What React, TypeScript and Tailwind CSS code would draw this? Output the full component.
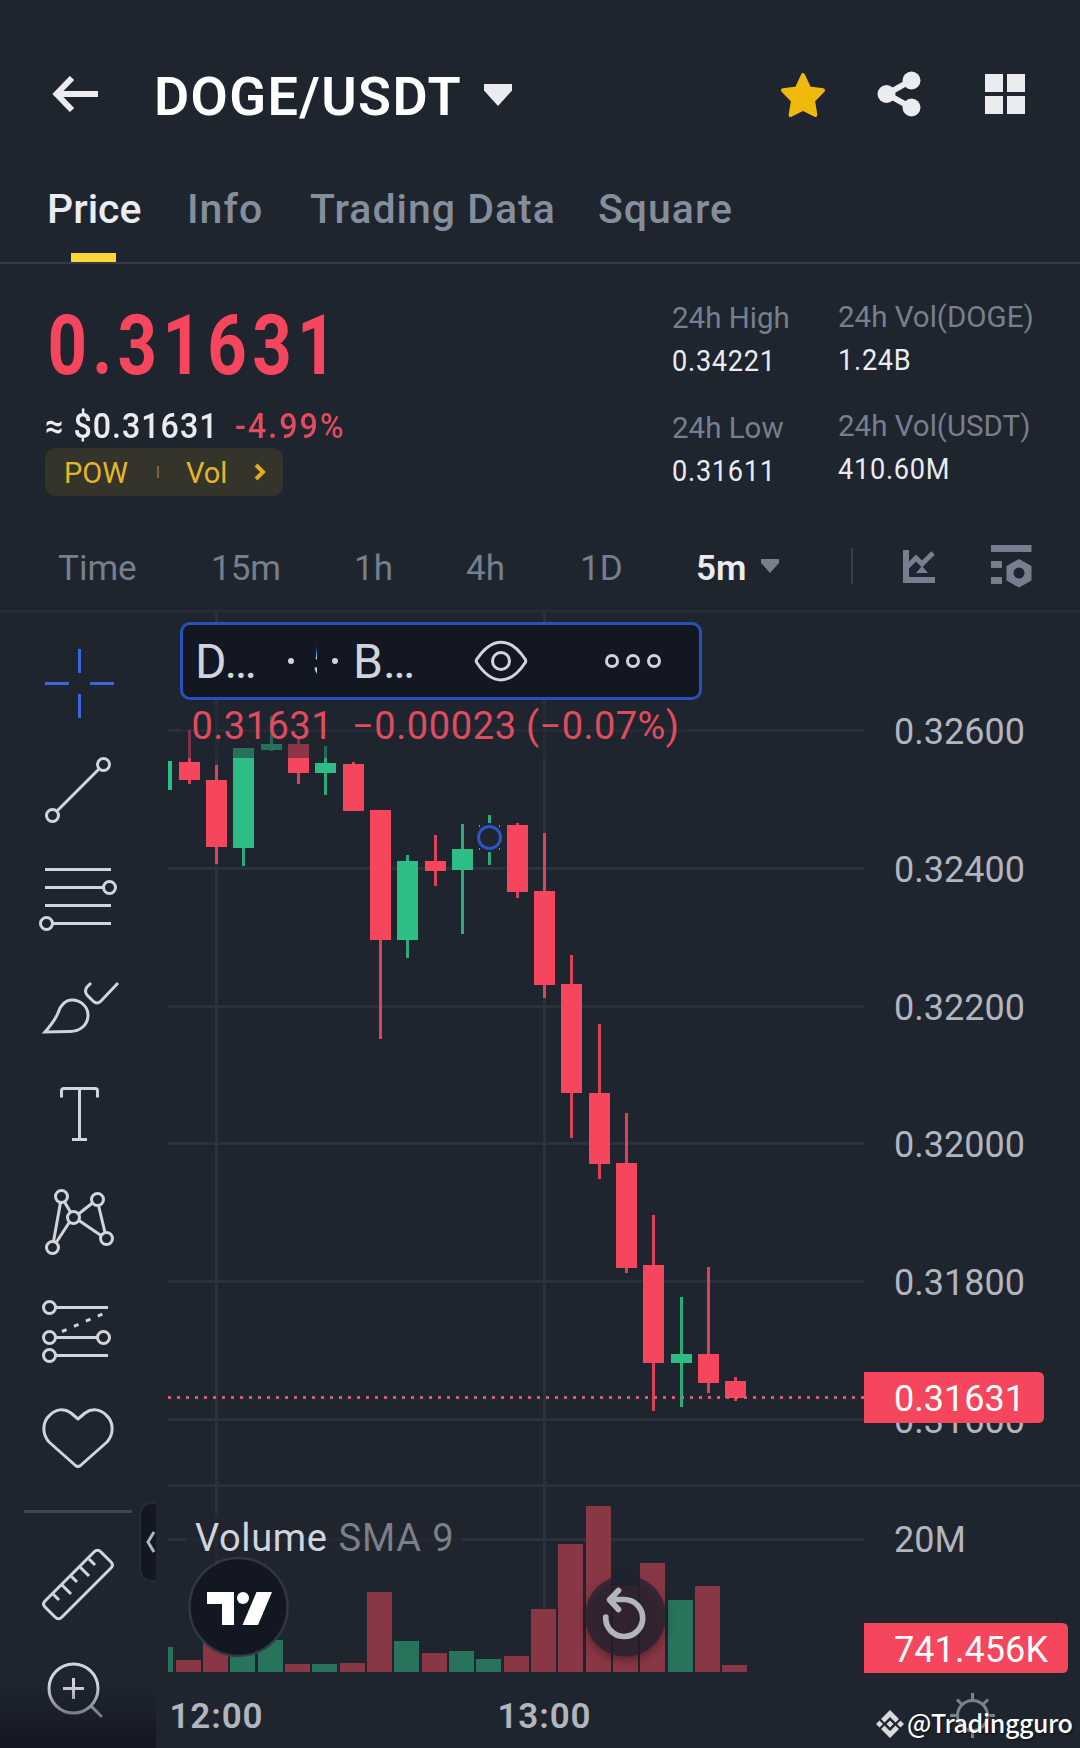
import type { ReactNode } from "react";

const UP = "#2ebd85";
const DOWN = "#f6465d";

const tabs = [
  { label: "Price", width: "w-[140px]", active: true },
  { label: "Info", width: "w-[123px]" },
  { label: "Trading Data", width: "w-[288px]" },
  { label: "Square", width: "w-[160px]" },
];

const intervals = [
  { label: "Time", width: "w-[153px]" },
  { label: "15m", width: "w-[143px]" },
  { label: "1h", width: "w-[112px]" },
  { label: "4h", width: "w-[114px]" },
  { label: "1D", width: "w-[116px]" },
];

const priceLevels = [
  { label: "0.32600", y: 730.5 },
  { label: "0.32400", y: 868.5 },
  { label: "0.32200", y: 1006.5 },
  { label: "0.32000", y: 1143.5 },
  { label: "0.31800", y: 1281.5 },
  { label: "0.31600", y: 1419.5 },
];

type Candle = {
  up?: boolean;
  body: [number, number];
  wick: [number, number];
  vol: number;
};

// first candle opens at 11:55, one every five minutes
const candles: Candle[] = [
  { body: [762, 780], wick: [730, 784], vol: 1660 },
  { body: [780, 847], wick: [765, 864], vol: 1640 },
  { up: true, body: [748, 848], wick: [748, 866], vol: 1650 },
  { up: true, body: [744, 750], wick: [716, 751], vol: 1640 },
  { body: [744, 773], wick: [737, 784], vol: 1664 },
  { up: true, body: [763, 773], wick: [746, 795], vol: 1664 },
  { body: [764, 811], wick: [762, 811], vol: 1663 },
  { body: [810, 940], wick: [810, 1039], vol: 1592 },
  { up: true, body: [861, 940], wick: [855, 958], vol: 1641 },
  { body: [861, 871], wick: [835, 886], vol: 1653 },
  { up: true, body: [849, 870], wick: [824, 934], vol: 1651 },
  { up: true, body: [825, 850], wick: [815, 865], vol: 1659 },
  { body: [825, 892], wick: [823, 898], vol: 1656 },
  { body: [891, 985], wick: [833, 998], vol: 1609 },
  { body: [984, 1093], wick: [955, 1138], vol: 1544 },
  { body: [1093, 1164], wick: [1024, 1179], vol: 1506 },
  { body: [1163, 1268], wick: [1113, 1273], vol: 1586 },
  { body: [1265, 1363], wick: [1215, 1411], vol: 1563 },
  { up: true, body: [1354, 1363], wick: [1297, 1407], vol: 1600 },
  { body: [1354, 1383], wick: [1267, 1393], vol: 1586 },
  { body: [1381, 1398], wick: [1377, 1401], vol: 1665 },
];

const candleX = (i: number) => Math.floor(216.51 + ((i - 1) * 328) / 12) + 0.5;

function Header() {
  return (
    <header className="flex h-[188px] items-center pl-[52px] pr-[55px]">
      <svg width="46" height="36" viewBox="0 0 46 36" fill="none" stroke="#eaecef" strokeWidth="6">
        <path d="M4 18H46M20 2 4.500 18 20 34" />
      </svg>
      <h1 className="ml-[56px] w-[330px] whitespace-nowrap pt-[6px] text-[54px] font-semibold leading-none tracking-[1.4px] text-white">
        DOGE/USDT
      </h1>
      <svg className="mt-[2px]" width="28" height="22" viewBox="0 0 28 22" fill="#eaecef">
        <path d="M0 0H28V6.500L14 22 0 6.500Z" />
      </svg>
      <div className="ml-auto flex items-center">
        <svg className="mt-[2px]" width="46" height="46" viewBox="0 0 46 46">
          <path
            d="M23 3 29.200 16.600 43 18.300 33 28.600 35.400 43 23 36.700 10.600 43 13 28.600 3 18.300 16.800 16.600Z"
            fill="#f0b90b"
            stroke="#f0b90b"
            strokeWidth="4"
            strokeLinejoin="round"
          />
        </svg>
        <svg className="ml-[51px]" width="44" height="46" viewBox="0 0 44 46" fill="#eaecef">
          <path d="M34 9.500 10 23 34 36.500" fill="none" stroke="#eaecef" strokeWidth="6" />
          <circle cx="9.500" cy="23" r="9" />
          <circle cx="34.500" cy="9.500" r="9" />
          <circle cx="34.500" cy="36.500" r="9" />
        </svg>
        <div className="ml-[64px] grid grid-cols-2 gap-[4px]">
          <i className="h-[18px] w-[18px] bg-[#eaecef]" />
          <i className="h-[18px] w-[18px] bg-[#eaecef]" />
          <i className="h-[18px] w-[18px] bg-[#eaecef]" />
          <i className="h-[18px] w-[18px] bg-[#eaecef]" />
        </div>
      </div>
    </header>
  );
}

function Tabs() {
  return (
    <nav className="flex h-[76px] border-b-2 border-[#333b47] pl-[47px]">
      {tabs.map((tab) => (
        <div key={tab.label} className={tab.width}>
          <div
            className={
              tab.active
                ? "whitespace-nowrap text-[41px] font-medium leading-[42px] text-[#eaecef]"
                : "whitespace-nowrap text-[41px] font-medium leading-[42px] tracking-[1px] text-[#848e9c]"
            }
          >
            {tab.label}
          </div>
          {tab.active && <div className="ml-[24px] mt-[23px] h-[9px] w-[45px] bg-[#fcd535]" />}
        </div>
      ))}
    </nav>
  );
}

function Stat({ label, value }: { label: string; value: string }) {
  return (
    <div className="whitespace-nowrap text-[29.500px] leading-[42px]">
      <div className="text-[#767f8d]">{label}</div>
      <div className="origin-left translate-y-px scale-x-[0.92] tracking-[0.8px] text-[#eaecef]">{value}</div>
    </div>
  );
}

function Ticker() {
  return (
    <section className="flex h-[258px] pl-[45px]">
      <div className="w-[627px] pt-[40px]">
        <div className="origin-left scale-x-[0.82] whitespace-nowrap pl-[3px] text-[84px] font-bold leading-[84px] tracking-[6.500px] text-[#f6465d]">
          0.31631
        </div>
        <div className="mt-[19px] flex h-[41px] whitespace-nowrap text-[35px] font-medium leading-[40px]">
          <span className="w-[190px] origin-left scale-x-[0.92] tracking-[1.100px] text-[#eaecef]">≈ $0.31631</span>
          <span className="origin-left scale-x-[0.92] tracking-[2.200px] text-[#e24a5f]">-4.99%</span>
        </div>
        <div className="flex h-[48px] w-[238px] items-center rounded-[11px] bg-[#35342b] pl-[19px] text-[29px] leading-none text-[#e4b52c]">
          <span className="w-[93px] pt-[2px]">POW</span>
          <i className="h-[12px] w-[2px] bg-[#7d6427]" />
          <span className="w-[95px] pl-[27px] pt-[2px]">Vol</span>
          <svg width="12" height="18" viewBox="0 0 12 18" fill="none" stroke="#e0ac1c" strokeWidth="4">
            <path d="M2 2 9 9 2 16" />
          </svg>
        </div>
      </div>
      <div className="flex w-[166px] flex-col gap-[26px] pt-[33px]">
        <Stat label="24h High" value="0.34221" />
        <Stat label="24h Low" value="0.31611" />
      </div>
      <div className="flex flex-col gap-[25px] pt-[32px]">
        <Stat label="24h Vol(DOGE)" value="1.24B" />
        <Stat label="24h Vol(USDT)" value="410.60M" />
      </div>
    </section>
  );
}

function Intervals() {
  return (
    <section className="flex h-[91px] items-center border-b-[3px] border-[#252c36] pl-[58px] text-[35px] text-[#767f8d]">
      {intervals.map((item) => (
        <span key={item.label} className={item.width + " pt-[6px]"}>
          {item.label}
        </span>
      ))}
      <span className="w-[65px] pt-[6px] font-semibold text-[#eaecef]">5m</span>
      <svg width="18" height="14" viewBox="0 0 18 14" fill="#767f8d">
        <path d="M0 0H18V4L9 14 0 4Z" />
      </svg>
      <i className="ml-[72px] h-[36px] w-[2px] bg-[#363e49]" />
      <svg className="ml-[50px]" width="32" height="33" viewBox="0 0 32 33">
        <path d="M3 0V30H32" fill="none" stroke="#767f8f" strokeWidth="6" />
        <path d="M4 17 13 8 19 14 30 3" fill="none" stroke="#767f8f" strokeWidth="5" />
        <path d="M13 23 19 16 25 23Z" fill="#767f8f" />
      </svg>
      <svg className="ml-[56px]" width="41" height="43" viewBox="0 0 41 43" fill="#767f8f">
        <path d="M0 0H40.500V7H0ZM0 16H11V23H0ZM0 32H11V39H0Z" />
        <path
          fillRule="evenodd"
          d="M28 14 40.500 21V35.500L28 42.500 15.500 35.500V21ZM28 22.500A5.500 5.500 0 1 0 28 33.500A5.500 5.500 0 1 0 28 22.500Z"
        />
      </svg>
    </section>
  );
}

function Tool({ children }: { children: ReactNode }) {
  return (
    <svg
      className="block shrink-0"
      width="156"
      height="108"
      viewBox="0 0 156 108"
      fill="none"
      stroke="#d1d4dc"
      strokeWidth="3"
    >
      {children}
    </svg>
  );
}

function Toolbar() {
  return (
    <aside className="relative flex h-[1135px] w-[156px] shrink-0 flex-col pt-[17px]">
      <Tool>
        <path d="M45 53.500H69M90 53.500H114M79.500 19V43M79.500 64V88" stroke="#3c66dd" />
      </Tool>
      <Tool>
        <circle cx="103.500" cy="26.500" r="6" />
        <circle cx="52.500" cy="77.500" r="6" />
        <path d="M57 73 99 31" />
      </Tool>
      <Tool>
        <path d="M45 23.500H111M45 41.500H103M45 59.500H111M53 77.500H111" />
        <circle cx="109.500" cy="41.500" r="6" />
        <circle cx="46.500" cy="77.500" r="6" />
      </Tool>
      <Tool>
        <path d="M45 78 C52 70 55 66 58 59 C60 52 65 46 72 46 C81 46 88 53 88 61 C88 71 80 77.500 70 77.500Z" />
        <path d="M91 29 87 33Q84 37 87 41L93 47Q97 51 101 47L118 29" />
      </Tool>
      <Tool>
        <path d="M61.500 35.500V29Q61.500 26.500 64 26.500H95Q97.500 26.500 97.500 29V35.500M79.500 26.500V77M72 77.500H87" />
      </Tool>
      <Tool>
        <circle cx="61.500" cy="26.500" r="6" />
        <circle cx="97.500" cy="29.500" r="6" />
        <circle cx="73.500" cy="47.500" r="6" />
        <circle cx="52.500" cy="77.500" r="6" />
        <circle cx="106.500" cy="68.500" r="6" />
        <path d="M60.500 32.500 53.500 71.500M64.500 32 70.500 42M92.500 33 78.500 44M69.500 52 56.500 72M79 50.500 101 65.500M98.500 35.500 105 62.500" />
      </Tool>
      <Tool>
        <path d="M56 29.500H108M56 59.500H97M56 77.500H108" />
        <path d="M62 53.500 106 34.500" strokeDasharray="5 8" />
        <circle cx="49.500" cy="29.500" r="6" />
        <circle cx="49.500" cy="59.500" r="6" />
        <circle cx="103.500" cy="59.500" r="6" />
        <circle cx="49.500" cy="77.500" r="6" />
      </Tool>
      <Tool>
        <path
          d="M78 33 71 27C64 22 56 23 50 29C42 36 42 48 49 56L75.500 79.500Q78 81.500 80.500 79.500L107 56C114 48 114 36 106 29C100 23 92 22 85 27Z"
          strokeLinejoin="round"
        />
      </Tool>
      <div className="ml-[24px] mt-[16px] h-[3px] w-[108px] shrink-0 bg-[#434651]" />
      <div className="h-[18px] shrink-0" />
      <Tool>
        <path d="M45 70 94 21Q97.500 17.500 101 21L111 31Q114 34 111 37L62 86Q58.500 89.500 55 86L45 76Q42 73 45 70Z" />
        <path d="M53 63 59 69M62 54 71 63M71 45 77 51M80 36 89 45M89 28 95 34" />
      </Tool>
      <Tool>
        <circle cx="73.500" cy="49.500" r="24.500" />
        <path d="M63 49.500H84M73.500 39V60M91 67 102 78" />
      </Tool>
      <div className="absolute bottom-0 left-0 h-[64px] w-[156px] bg-gradient-to-b from-[#131722]/0 to-[#131722]" />
      <div className="absolute right-0 top-[889px] flex h-[80px] w-[17px] items-center rounded-l-[13px] border-2 border-r-0 border-[#262b36] bg-[#131722] pl-[5px]">
        <svg width="10" height="22" viewBox="0 0 10 22" fill="none" stroke="#a9b7c2" strokeWidth="3">
          <path d="M8 1 2 11 8 21" />
        </svg>
      </div>
    </aside>
  );
}

function Legend() {
  return (
    <div className="absolute left-[24px] top-[9px] flex h-[78px] w-[522px] items-center rounded-[10px] border-[3px] border-[#2850b8] bg-[#131722] pl-[12px] text-[48px] leading-none text-[#d1d4dc]">
      <span className="w-[93px] pt-px tracking-[0.5px]">D…</span>
      <i className="h-[6px] w-[6px] rounded-full bg-[#d1d4dc]" />
      <span className="ml-[17px] h-[48px] w-[6px] overflow-hidden">5</span>
      <i className="ml-[15px] h-[6px] w-[6px] rounded-full bg-[#d1d4dc]" />
      <span className="ml-[15px] w-[121px] pt-px">B…</span>
      <svg width="54" height="42" viewBox="0 0 54 42" fill="none" stroke="#d1d4dc" strokeWidth="3">
        <path d="M3 19C18-3.500 36-3.500 51 19Q52.500 21 51 23C36 45.500 18 45.500 3 23Q1.500 21 3 19Z" />
        <circle cx="27" cy="21" r="8.500" />
      </svg>
      <svg className="ml-[77px]" width="56" height="16" viewBox="0 0 56 16" fill="none" stroke="#d1d4dc" strokeWidth="3">
        <circle cx="7" cy="8" r="5.500" />
        <circle cx="28" cy="8" r="5.500" />
        <circle cx="49" cy="8" r="5.500" />
      </svg>
    </div>
  );
}

function Chart() {
  return (
    <svg
      className="block font-[Roboto,sans-serif]"
      width="924"
      height="1135"
      viewBox="156 613 924 1135"
      fontSize="36"
    >
      <g stroke="#2a313b" strokeWidth="3">
        <path d="M216.500 613V1672M544.500 613V1672" />
        {priceLevels.map((level) => (
          <path key={level.y} d={`M168 ${level.y}H864`} />
        ))}
        <path d="M168 1485.500H1080M168 1539.500H864" />
      </g>

      {/* volume */}
      <rect x="168" y="1647" width="5" height="25" fill="#27735b" />
      {candles.map((c, i) => (
        <rect
          key={i}
          x={candleX(i) - 13.500}
          y={c.vol}
          width="25"
          height={1672 - c.vol}
          fill={c.up ? "#27735b" : "#8a3745"}
        />
      ))}

      {/* candles */}
      <rect x="168" y="761" width="4" height="29" fill={UP} />
      {candles.map((c, i) => (
        <g key={i} fill={c.up ? UP : DOWN}>
          <rect x={candleX(i) - 1.500} y={c.wick[0]} width="3" height={c.wick[1] - c.wick[0]} opacity="0.88" />
          <rect x={candleX(i) - 10.500} y={c.body[0]} width="21" height={c.body[1] - c.body[0]} />
        </g>
      ))}

      {/* selected point */}
      <rect x="480" y="823" width="19" height="29" fill="#1f252f" />
      <rect x="478" y="827" width="23" height="21" fill="#1f252f" />
      <circle cx="489.500" cy="837.500" r="11" fill="#1f252f" stroke="#2b55c9" strokeWidth="3" />

      <path d="M168 1397.500H864" stroke="#e0566a" strokeWidth="3" strokeDasharray="3 6" />

      {/* last price row */}
      <rect x="180" y="703" width="508" height="55" fill="#1f252f" opacity="0.5" />
      <g fill="#e04c5f" fontSize="38">
        <text x="191.500" y="739" textLength="141">0.31631</text>
        <text x="352" y="739" textLength="164">−0.00023</text>
        <text x="526" y="739" textLength="153">(−0.07%)</text>
      </g>

      <rect x="186" y="1514" width="276" height="46" fill="#1f252f" opacity="0.6" />
      <text x="195" y="1551" fontSize="38" fill="#d1d4dc" textLength="132">Volume</text>
      <text x="338.500" y="1551" fontSize="38" fill="#7b7f8a" textLength="115">SMA 9</text>

      {/* axis */}
      <g fill="#b2b5be">
        {priceLevels.map((level) => (
          <text key={level.label} x="894" y={level.y + 13} textLength="131">
            {level.label}
          </text>
        ))}
        <text x="894" y="1551.500">20M</text>
        <g fontSize="35" fontWeight="600" textAnchor="middle">
          <text x="216" y="1728" textLength="93">12:00</text>
          <text x="544" y="1728" textLength="93">13:00</text>
        </g>
      </g>
      <path d="M864 1372H1038Q1044 1372 1044 1378V1417Q1044 1423 1038 1423H864Z" fill={DOWN} />
      <path d="M864 1623H1062Q1068 1623 1068 1629V1667Q1068 1673 1062 1673H864Z" fill={DOWN} />
      <text x="894" y="1411" fill="#fff" textLength="131">0.31631</text>
      <text x="894" y="1662" fill="#fff" textLength="154">741.456K</text>

      {/* TradingView badge */}
      <circle cx="238.500" cy="1607" r="49" fill="#131722" stroke="#363a45" strokeOpacity="0.9" strokeWidth="2.500" />
      <g fill="#fff">
        <path d="M207 1592H234V1625H222V1604H207Z" />
        <circle cx="243" cy="1598" r="6" />
        <path d="M256.500 1592H272L258 1625H242.500Z" />
      </g>

      {/* reset button */}
      <circle className="drop-shadow-[0_4px_5px_rgba(0,0,0,0.45)]" cx="625.500" cy="1616" r="40.500" fill="#222230" fillOpacity="0.76" />
      <g fill="none" stroke="#b2b5be" strokeWidth="5.700" strokeLinecap="round" strokeLinejoin="round">
        <path d="M605.700 1617A18.500 18.500 0 1 0 624 1599.500H611" />
        <path d="M618.500 1590.500 609.500 1599.800 618.500 1609.500" />
      </g>

      {/* theme toggle */}
      <g fill="none" stroke="#7d808a" strokeWidth="3">
        <circle cx="972.500" cy="1715.500" r="15" />
        <path d="M972.500 1693V1700M972.500 1731V1738M950 1715.500H957M988 1715.500H995M957 1699.500 962 1704.500M988 1699.500 983 1704.500" />
      </g>

      {/* author tag */}
      <g fill="#d9dadc">
        <path d="M890 1710 899 1719 895.500 1722.500 890 1717 884.500 1722.500 881 1719Z" />
        <path d="M890 1738 899 1729 895.500 1725.500 890 1731 884.500 1725.500 881 1729Z" />
        <path d="M890 1720.500 893.500 1724 890 1727.500 886.500 1724ZM879.500 1720.500 883 1724 879.500 1727.500 876 1724ZM900.500 1720.500 904 1724 900.500 1727.500 897 1724Z" />
      </g>
      <text
        className="font-['Noto_Sans_CJK_SC','Noto_Sans',sans-serif] [text-shadow:1px_1px_2px_rgba(0,0,0,0.6)]"
        x="907"
        y="1733"
        fontSize="25"
        fontWeight="500"
        fill="#fff"
        textLength="166"
      >
        @Tradingguro
      </text>
    </svg>
  );
}

export default function App() {
  return (
    <main className="h-[1748px] w-[1080px] overflow-hidden bg-[#1f252f] font-[Roboto,'Noto_Sans',sans-serif]">
      <Header />
      <Tabs />
      <Ticker />
      <Intervals />
      <div className="flex">
        <Toolbar />
        <div className="relative">
          <Chart />
          <Legend />
        </div>
      </div>
    </main>
  );
}
